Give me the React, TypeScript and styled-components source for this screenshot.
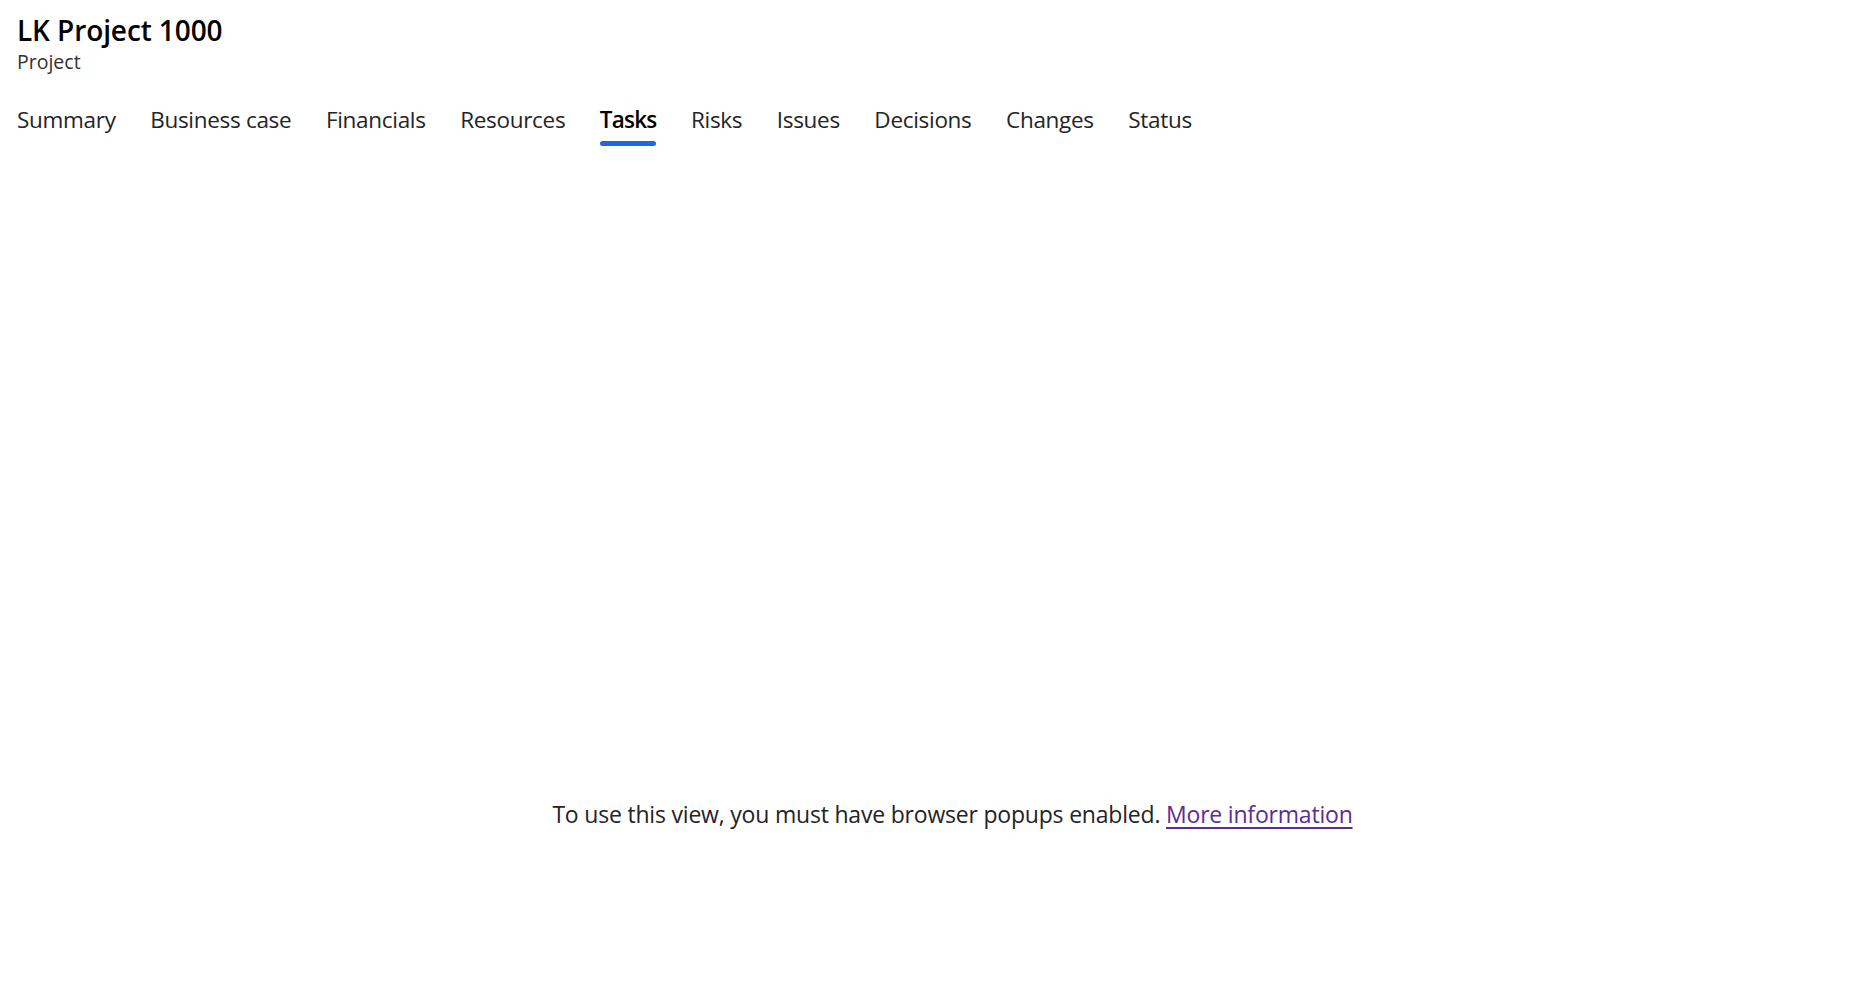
import React from 'react'
import styled, { createGlobalStyle } from 'styled-components'

const GlobalStyle = createGlobalStyle`
    html, body {
        margin: 0;
        padding: 0;
        background: #ffffff;
    }
    body {
        font-family: "Segoe UI", "Open Sans", "Noto Sans", sans-serif;
        color: #242424;
    }
`

const Page = styled.div`
    display: flex;
    flex-direction: column;
    min-height: 993px;
`

const Header = styled.header`
    display: flex;
    flex-direction: column;
    padding: 11px 0 0 17px;
`

const Title = styled.h1`
    margin: 0;
    font-size: 28px;
    font-weight: 600;
    line-height: 38px;
    color: #000000;
    letter-spacing: -0.1px;
`

const Subtitle = styled.div`
    font-size: 19.5px;
    line-height: 26px;
    color: #323130;
`

const TabBar = styled.nav`
    display: flex;
    gap: 34.5px;
    padding: 29px 0 0 17px;
`

const Tab = styled.div<{ $active?: boolean }>`
    position: relative;
    font-size: 22.5px;
    line-height: 32px;
    padding-bottom: 14px;
    font-weight: ${p => (p.$active ? 600 : 400)};
    color: ${p => (p.$active ? '#000000' : '#242424')};
    letter-spacing: ${p => (p.$active ? '-0.8px' : '-0.3px')};
    cursor: pointer;

    &::after {
        content: '';
        display: ${p => (p.$active ? 'block' : 'none')};
        position: absolute;
        left: 0;
        right: 0;
        bottom: 4px;
        height: 5px;
        border-radius: 3px;
        background: #2266e3;
    }
`

const Body = styled.main`
    display: flex;
    justify-content: center;
    padding: 649px 0 0 36px;
`

const Message = styled.p`
    margin: 0;
    font-size: 23px;
    line-height: 30px;
    color: #242424;
    letter-spacing: -0.2px;
`

const MoreLink = styled.a`
    color: #5c2d91;
    text-decoration: underline;
    text-decoration-thickness: 2px;
    text-underline-offset: 4px;
`

const tabs = ['Summary', 'Business case', 'Financials', 'Resources', 'Tasks', 'Risks', 'Issues', 'Decisions', 'Changes', 'Status']

export default function App() {
    return (
        <Page>
            <GlobalStyle />
            <Header>
                <Title>LK Project 1000</Title>
                <Subtitle>Project</Subtitle>
            </Header>
            <TabBar>
                {tabs.map(t => (
                    <Tab key={t} $active={t === 'Tasks'}>{t}</Tab>
                ))}
            </TabBar>
            <Body>
                <Message>
                    To use this view, you must have browser popups enabled.{' '}
                    <MoreLink href="#">More information</MoreLink>
                </Message>
            </Body>
        </Page>
    )
}
